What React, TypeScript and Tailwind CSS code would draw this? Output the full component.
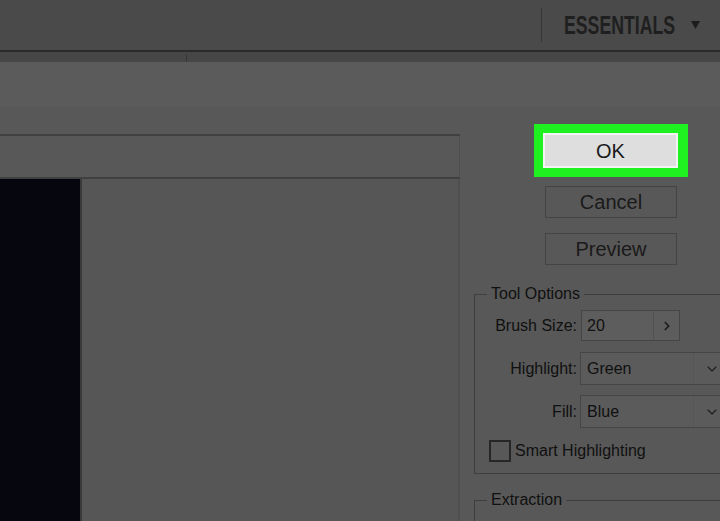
import { ChevronDown, ChevronRight } from "lucide-react";

const labelCls = "w-[102px] shrink-0 text-right text-[16px] leading-none text-[#101010]";

const SelectBox = ({ value }: { value: string }) => (
  <div className="ml-[3px] flex h-[33px] w-[160px] shrink-0 items-center border border-[#454545] bg-[#5b5b5b]">
    <span className="flex-1 pl-[6px] text-[16px] leading-none text-[#101010]">{value}</span>
    <div className="flex h-full w-[46px] items-center border-l border-[#555] pl-[10px]">
      <ChevronDown className="h-[16px] w-[16px] text-[#1c1c1c]" strokeWidth={1.6} />
    </div>
  </div>
);

export default function App() {
  return (
    <div className="flex h-[521px] w-[720px] flex-col overflow-hidden bg-[#585858] font-['Liberation_Sans',Arial,sans-serif] text-[#161616]">
      {/* workspace bar */}
      <header className="flex h-[50px] shrink-0 items-center bg-[#4a4a4a]">
        <div className="flex-1" />
        <div className="h-[34px] w-px bg-[#363636]" />
        <div className="ml-[22px] mt-[3px] w-[111px] overflow-visible whitespace-nowrap">
          <span className="inline-block origin-left scale-x-[0.68] text-[26px] font-bold leading-none text-[#1f1f1f]">
            ESSENTIALS
          </span>
        </div>
        <svg className="ml-[16px] mr-[20px]" width="9" height="8" viewBox="0 0 9 8">
          <path d="M0 0h9L4.5 8z" fill="#1c1c1c" />
        </svg>
      </header>
      <div className="h-[2px] shrink-0 bg-[#2a2a2a]" />
      <div className="flex h-[10px] shrink-0 bg-[#464646]">
        <div className="w-[186px]" />
        <div className="mt-[3px] h-[6px] w-px bg-[#333]" />
      </div>

      {/* dialog */}
      <div className="h-[44px] shrink-0 bg-[#5b5b5b]" />
      <div className="flex flex-1">
        {/* preview area */}
        <div className="flex w-[460px] shrink-0 flex-col">
          <div className="h-[28px] shrink-0" />
          <div className="h-[2px] shrink-0 bg-[#404040]" />
          <div className="h-[41px] shrink-0 border-r border-[#4f4f4f]" />
          <div className="h-[2px] shrink-0 bg-[#404040]" />
          <div className="flex flex-1">
            <div className="w-[82px] border-r-2 border-[#3a3a3a] bg-[#06060f]" />
            <div className="flex-1 border-r-2 border-[#4f4f4f] bg-[#565656]" />
          </div>
        </div>

        {/* controls */}
        <div className="flex-1 pt-[18px]">
          <div className="ml-[74px] h-[53px] w-[154px] bg-[#1ff01f] p-[9px] pr-[10px]">
            <div className="flex h-full items-center justify-center border-2 border-[#f3f3f3] bg-[#dedede] text-[20px] leading-none text-[#1a1a1a]">
              OK
            </div>
          </div>
          <div className="ml-[85px] mt-[9px] flex h-[32px] w-[132px] items-center justify-center border border-[#444] text-[20px] leading-none text-[#1a1a1a]">
            Cancel
          </div>
          <div className="ml-[85px] mt-[15px] flex h-[32px] w-[132px] items-center justify-center border border-[#444] text-[20px] leading-none text-[#1a1a1a]">
            Preview
          </div>

          <fieldset className="ml-[14px] mt-[20px] w-[270px] border border-[#3e3e3e] pb-[11px]">
            <legend className="ml-[12px] px-[4px] text-[16px] leading-[18px] text-[#101010]">
              Tool Options
            </legend>
            <div className="mt-[7px] flex items-center">
              <span className={labelCls}>Brush Size:</span>
              <div className="ml-[4px] flex h-[31px] w-[99px] items-center border border-[#454545] bg-[#5d5d5d]">
                <span className="flex-1 pl-[5px] text-[16px] leading-none text-[#101010]">20</span>
                <div className="flex h-full w-[26px] items-center justify-center border-l border-[#525252]">
                  <ChevronRight className="h-[14px] w-[14px] text-[#1c1c1c]" strokeWidth={3} />
                </div>
              </div>
            </div>
            <div className="mt-[11px] flex items-center">
              <span className={labelCls}>Highlight:</span>
              <SelectBox value="Green" />
            </div>
            <div className="mt-[10px] flex items-center">
              <span className={labelCls}>Fill:</span>
              <SelectBox value="Blue" />
            </div>
            <div className="ml-[14px] mt-[12px] flex items-center">
              <div className="h-[22px] w-[22px] border-2 border-[#262626]" />
              <span className="ml-[4px] text-[16px] leading-none text-[#101010]">
                Smart Highlighting
              </span>
            </div>
          </fieldset>

          <fieldset className="ml-[14px] mt-[17px] h-[60px] w-[270px] border border-[#3e3e3e]">
            <legend className="ml-[12px] px-[4px] text-[16px] leading-[18px] text-[#101010]">
              Extraction
            </legend>
          </fieldset>
        </div>
      </div>
    </div>
  );
}
